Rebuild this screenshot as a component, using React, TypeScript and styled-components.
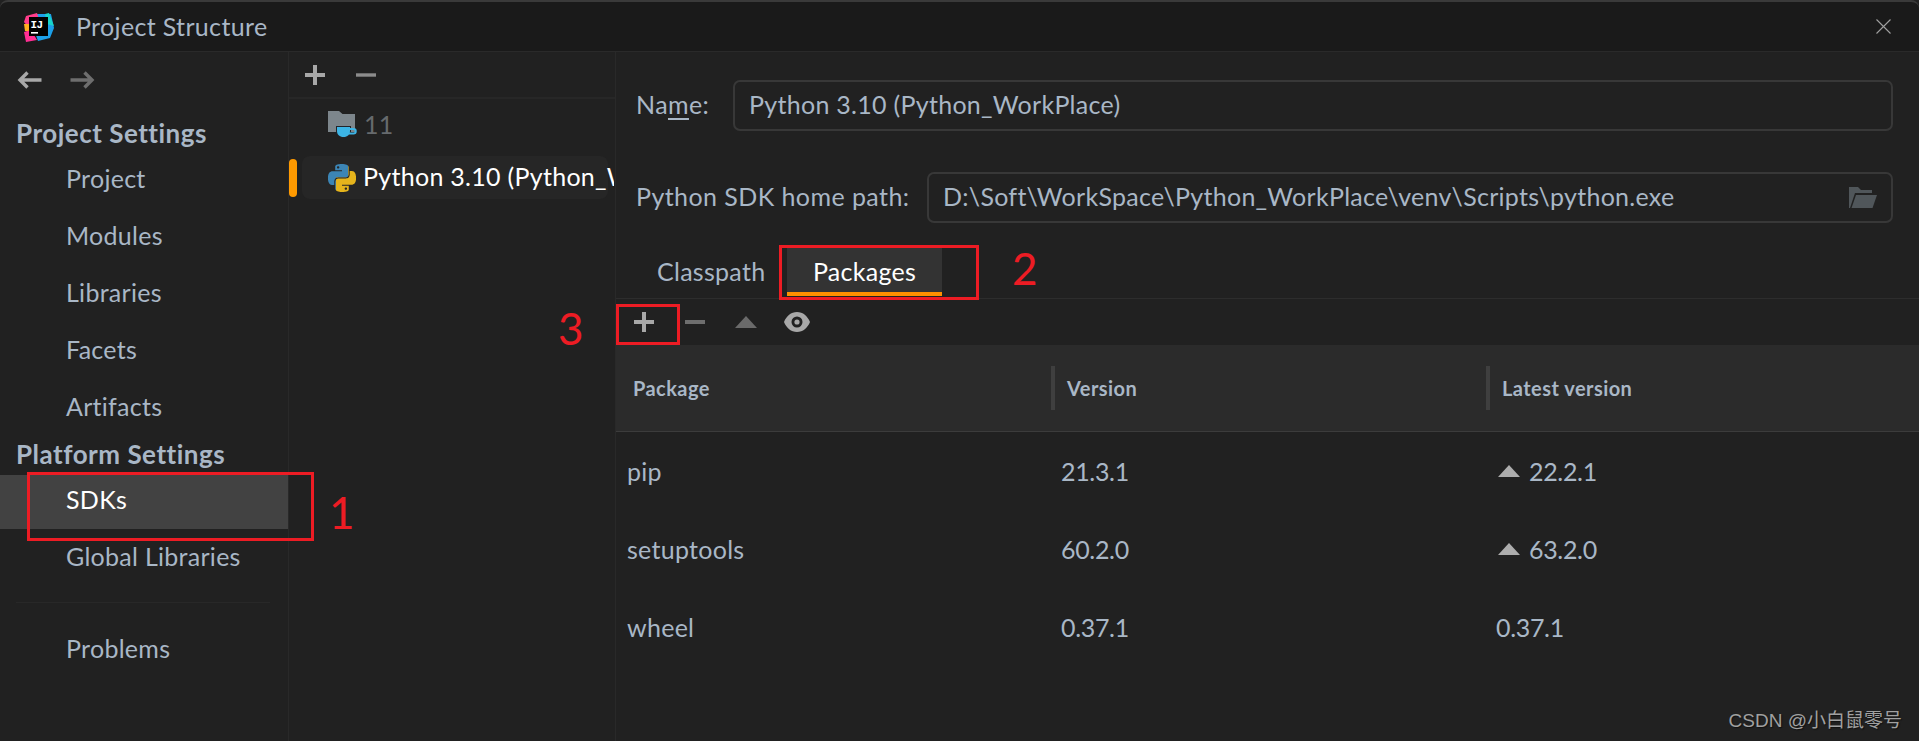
import React from "react"
import styled, { createGlobalStyle } from "styled-components"

const UI_FONT = `Lato, "Noto Sans", sans-serif`

const GlobalStyle = createGlobalStyle`
  html, body {
    margin: 0;
    padding: 0;
    background: #212121;
  }
  * {
    box-sizing: border-box;
  }
`

const pythonPath =
  "M14.25.18l.9.2.73.26.59.3.45.32.34.34.25.34.16.33.1.3.04.26.02.2-.01.13V8.5l-.05.63-.13.55-.21.46-.26.38-.3.31-.33.25-.35.19-.35.14-.33.1-.3.07-.26.04-.21.02H8.77l-.69.05-.59.14-.5.22-.41.27-.33.32-.27.35-.2.36-.15.37-.1.35-.07.32-.04.27-.02.21v3.06H3.17l-.21-.03-.28-.07-.32-.12-.35-.18-.36-.26-.36-.36-.35-.46-.32-.59-.28-.73-.21-.88-.14-1.05-.05-1.23.06-1.22.16-1.04.24-.87.32-.71.36-.57.4-.44.42-.33.42-.24.4-.16.36-.1.32-.05.24-.01h.16l.06.01h8.16v-.83H6.18l-.01-2.75-.02-.37.05-.34.11-.31.17-.28.25-.26.31-.23.38-.2.44-.18.51-.15.58-.12.64-.1.71-.06.77-.04.84-.02 1.27.05zm-6.3 1.98l-.23.33-.08.41.08.41.23.34.33.22.41.09.41-.09.33-.22.23-.34.08-.41-.08-.41-.23-.33-.33-.22-.41-.09-.41.09zm13.09 3.95l.28.06.32.12.35.18.36.27.36.35.35.47.32.59.28.73.21.88.14 1.04.05 1.23-.06 1.23-.16 1.04-.24.86-.32.71-.36.57-.4.45-.42.33-.42.24-.4.16-.36.09-.32.05-.24.02-.16-.01h-8.22v.82h5.84l.01 2.76.02.36-.05.34-.11.31-.17.29-.25.25-.31.24-.38.2-.44.17-.51.15-.58.13-.64.09-.71.07-.77.04-.84.01-1.27-.04-1.07-.14-.9-.2-.73-.25-.59-.3-.45-.33-.34-.34-.25-.34-.16-.33-.1-.3-.04-.25-.02-.2.01-.13v-5.34l.05-.64.13-.54.21-.46.26-.38.3-.32.33-.24.35-.2.35-.14.33-.1.3-.06.26-.04.21-.02.13-.01h5.84l.69-.05.59-.14.5-.21.41-.28.33-.32.27-.35.2-.36.15-.36.1-.35.07-.32.04-.28.02-.21V6.07h2.09l.14.01zm-6.47 14.25l-.23.33-.08.41.08.41.23.33.33.23.41.08.41-.08.33-.23.23-.33.08-.41-.08-.41-.23-.33-.33-.23-.41-.08-.41.08z"

const IdeaLogo = () => (
  <svg width="31" height="30" viewBox="0 0 31 30">
    <polygon points="14,2 28,2 31,16 27,26 15,29 11,18" fill="#1c9fe8" />
    <polygon points="22,2 26,1 31,14 24,12" fill="#19d4c8" />
    <polygon points="3,4 14,1 17,10 6,16 1,10" fill="#ff3d8b" />
    <polygon points="1,12 8,12 8,20 2,19" fill="#ffb020" />
    <polygon points="1,20 8,18 14,28 3,30" fill="#ff2e93" />
    <rect x="6" y="5" width="19" height="19" fill="#000" />
    <text x="7.5" y="15.5" fontFamily="'Liberation Mono', monospace" fontWeight="700" fontSize="11" fill="#fff" textLength="13">
      IJ
    </text>
    <rect x="8" y="20" width="7" height="1.6" fill="#fff" />
  </svg>
)

const CloseIcon = () => (
  <svg width="15" height="15" viewBox="0 0 15 15">
    <path d="M.5.5l14 14M14.5.5l-14 14" stroke="#a0a0a0" strokeWidth="1.1" fill="none" />
  </svg>
)

const ArrowIcon = ({ right, color }: { right?: boolean; color: string }) => (
  <svg width="25" height="18" viewBox="0 0 25 18" style={right ? { transform: "scaleX(-1)" } : undefined}>
    <path d="M24.5 9H3M10.5 1.5L3 9l7.5 7.5" stroke={color} strokeWidth="3.4" fill="none" />
  </svg>
)

const PlusIcon = () => (
  <svg width="20" height="20" viewBox="0 0 20 20">
    <path d="M10 0v20M0 10h20" stroke="#a8a8a8" strokeWidth="4" fill="none" />
  </svg>
)

const MinusIcon = () => (
  <svg width="20" height="20" viewBox="0 0 20 20">
    <path d="M0 10h20" stroke="#6e6e6e" strokeWidth="4" fill="none" />
  </svg>
)

const SmallMinusIcon = () => (
  <svg width="20" height="20" viewBox="0 0 20 20">
    <path d="M0 10h20" stroke="#8c8c8c" strokeWidth="3.4" fill="none" />
  </svg>
)

const UpIcon = ({ color, w, h }: { color: string; w: number; h: number }) => (
  <svg width={w} height={h} viewBox="0 0 22 12">
    <polygon points="11,0 22,12 0,12" fill={color} />
  </svg>
)

const EyeIcon = () => (
  <svg width="26" height="20" viewBox="0 0 26 20">
    <path
      fillRule="evenodd"
      d="M13 0C7 0 2.500 4 0 10c2.500 6 7 10 13 10s10.500-4 13-10C23.500 4 19 0 13 0zm0 4.500a5.500 5.500 0 1 1 0 11 5.500 5.500 0 0 1 0-11z"
      fill="#a8a8a8"
    />
    <circle cx="13" cy="10" r="2.600" fill="#a8a8a8" />
  </svg>
)

const FolderOpenIcon = () => (
  <svg width="28" height="21" viewBox="0 0 28 21">
    <path d="M0 0h9l3 3h11v3H6L1 21H0z" fill="#50565a" />
    <path d="M7 8h21l-4.500 13H2.500z" fill="#50565a" />
  </svg>
)

const SdkFolderIcon = () => (
  <svg width="29" height="27" viewBox="0 0 29 27">
    <path d="M0 0h11l3.500 3H27v18H0z" fill="#7d868c" />
    <path d="M8 15h15v5c0 4-3 7-7.500 7S8 24 8 20z" fill="#22242a" />
    <path d="M9 16h13v4c0 3.500-2.500 6-6.500 6S9 23.500 9 20z" fill="#3cb4e5" />
    <path d="M22 18h3.500a2.200 2.200 0 0 1 0 4.500H21" stroke="#3cb4e5" strokeWidth="2" fill="none" />
  </svg>
)

const PythonIcon = () => (
  <svg width="28" height="28" viewBox="0 0 24 24">
    <defs>
      <clipPath id="py-top">
        <polygon points="0,0 17.400,0 17.400,11.500 6.800,11.500 6.800,24 0,24" />
      </clipPath>
      <clipPath id="py-bottom">
        <polygon points="17.400,0 24,0 24,24 6.800,24 6.800,11.500 17.400,11.500" />
      </clipPath>
    </defs>
    <path d={pythonPath} fill="#3c85b5" clipPath="url(#py-top)" />
    <path d={pythonPath} fill="#e5b41c" clipPath="url(#py-bottom)" />
  </svg>
)

const Window = styled.div`
  position: relative;
  width: 1919px;
  height: 741px;
  overflow: hidden;
  display: flex;
  flex-direction: column;
  background: #212121;
  color: #a9b7c6;
  font-family: ${UI_FONT};
  font-size: 25px;
  letter-spacing: 0.28px;
`

const TitleBar = styled.header`
  flex: none;
  height: 52px;
  display: flex;
  align-items: center;
  padding: 0 28px 0 23px;
  background: #1a1a1a;
  border-top: 2px solid #3a3a3a;
  border-bottom: 1px solid #2a2a2a;
  border-radius: 8px 8px 0 0;
`

const Title = styled.span`
  flex: 1;
  margin-left: 22px;
  padding-bottom: 2px;
  letter-spacing: 0.34px;
`

const Body = styled.div`
  flex: 1;
  display: flex;
  min-height: 0;
`

const Sidebar = styled.nav`
  flex: none;
  width: 289px;
  border-right: 1px solid #292929;
`

const NavRow = styled.div`
  height: 66px;
  display: flex;
  gap: 28px;
  padding: 19px 0 0 17px;
`

const SectionHeading = styled.div`
  height: 36px;
  padding: 0 0 7px 16px;
  display: flex;
  align-items: center;
  font-weight: 700;
  font-size: 26px;
  letter-spacing: 0.5px;
`

const NavItem = styled.div<{ $active?: boolean }>`
  height: 54px;
  margin-bottom: 3px;
  padding: 0 0 7px 66px;
  display: flex;
  align-items: center;
  background: ${(p) => (p.$active ? "#424242" : "transparent")};
  color: ${(p) => (p.$active ? "#ffffff" : "#a9b7c6")};
`

const NavSeparator = styled.div`
  height: 1px;
  margin: 16px 18px 21px 16px;
  background: #282828;
`

const SdkColumn = styled.section`
  flex: none;
  width: 327px;
  overflow: hidden;
  border-right: 1px solid #292929;
`

const SdkToolbar = styled.div`
  height: 47px;
  display: flex;
  align-items: center;
  border-bottom: 2px solid #272727;
`

const ToolSlot = styled.span`
  flex: none;
  width: 51px;
  display: flex;
  justify-content: center;
  align-items: center;
`

const SdkList = styled.div`
  padding-top: 4px;
`

const SdkRow = styled.div<{ $selected?: boolean }>`
  display: flex;
  align-items: center;
  height: 43px;
  margin-bottom: 10px;
  white-space: nowrap;
  padding-left: ${(p) => (p.$selected ? "0" : "39px")};
  color: ${(p) => (p.$selected ? "#ffffff" : "#666a6d")};
  svg {
    flex: none;
  }
`

const SelectionBar = styled.span`
  flex: none;
  width: 8px;
  height: 38px;
  margin-right: 5px;
  border-radius: 4px;
  background: #ff9a00;
`

const SelectedBox = styled.div`
  flex: none;
  width: 306px;
  height: 43px;
  padding-left: 26px;
  display: flex;
  align-items: center;
  gap: 7px;
  border-radius: 8px;
  background: #262626;
`

const SdkName = styled.span`
  margin-left: 7px;
  padding-bottom: 1px;
`

const SelectedName = styled.span`
  flex: none;
  width: 251px;
  overflow: hidden;
  padding-bottom: 4px;
`

const Details = styled.main`
  flex: 1;
  min-width: 0;
  display: flex;
  flex-direction: column;
  padding-top: 28px;
`

const FieldRow = styled.div`
  display: flex;
  align-items: center;
  padding: 0 26px 0 20px;
  margin-bottom: 41px;
  &:nth-of-type(2) {
    margin-bottom: 25px;
  }
`

const FieldLabel = styled.label<{ $width: number }>`
  flex: none;
  padding-bottom: 3px;
  width: ${(p) => p.$width}px;
  letter-spacing: 0.42px;
  u {
    text-underline-offset: 4px;
  }
`

const FieldInput = styled.div`
  flex: 1;
  height: 51px;
  display: flex;
  align-items: center;
  justify-content: space-between;
  padding: 0 14px 3px 14px;
  border: 2px solid #383838;
  border-radius: 7px;
  svg {
    margin-top: 3px;
  }
`

const Tabs = styled.div`
  flex: none;
  height: 51px;
  display: flex;
  padding-left: 41px;
  border-bottom: 1px solid #2d2d2d;
`

const Tab = styled.div<{ $active?: boolean }>`
  height: 48px;
  padding-top: 1px;
  display: flex;
  align-items: center;
  width: ${(p) => (p.$active ? "155px" : "130px")};
  justify-content: ${(p) => (p.$active ? "center" : "flex-start")};
  color: ${(p) => (p.$active ? "#ffffff" : "#a9b7c6")};
  background: ${(p) => (p.$active ? "#333333" : "transparent")};
  border-bottom: ${(p) => (p.$active ? "4px solid #ff9000" : "4px solid transparent")};
`

const PackageToolbar = styled.div`
  flex: none;
  height: 46px;
  display: flex;
  align-items: center;
  padding-left: 2px;
`

const TableHeader = styled.div`
  flex: none;
  height: 87px;
  display: grid;
  grid-template-columns: 435px 435px 1fr;
  background: #2b2b2b;
  border-bottom: 1px solid #3c3c3c;
  font-size: 20px;
  font-weight: 700;
  letter-spacing: 0.45px;
`

const HeaderCell = styled.div`
  display: flex;
  align-items: center;
  &:first-child {
    padding-left: 17px;
  }
`

const HeaderDivider = styled.span`
  flex: none;
  width: 4px;
  height: 44px;
  margin-right: 12px;
  background: #3f3f3f;
`

const TableRow = styled.div`
  height: 78px;
  display: grid;
  grid-template-columns: 435px 435px 1fr;
  align-items: center;
`

const Cell = styled.div`
  display: flex;
  align-items: center;
  padding-left: 10px;
  letter-spacing: -0.32px;
  &:first-child {
    padding-left: 11px;
    letter-spacing: 0.28px;
  }
`

const UpgradeMark = styled.span`
  display: flex;
  margin: 0 9px 0 2px;
`

const Annotation = styled.div<{ $left: number; $top: number; $width: number; $height: number }>`
  position: absolute;
  left: ${(p) => p.$left}px;
  top: ${(p) => p.$top}px;
  width: ${(p) => p.$width}px;
  height: ${(p) => p.$height}px;
  border: 3px solid #ed1c24;
`

const AnnotationNumber = styled.span<{ $left: number; $top: number }>`
  position: absolute;
  left: ${(p) => p.$left}px;
  top: ${(p) => p.$top}px;
  font-size: 44px;
  line-height: 44px;
  color: #ed1c24;
`

const Watermark = styled.span`
  position: absolute;
  right: 17px;
  top: 709px;
  font-family: "Liberation Sans", "Noto Sans CJK SC", sans-serif;
  font-size: 19px;
  line-height: 24px;
  letter-spacing: 0;
  color: #a0a0a0;
  text-shadow: 1px 1px 1px #111;
`

const sidebarTop = ["Project", "Modules", "Libraries", "Facets", "Artifacts"]

const packages = [
  { name: "pip", version: "21.3.1", latest: "22.2.1", upgrade: true },
  { name: "setuptools", version: "60.2.0", latest: "63.2.0", upgrade: true },
  { name: "wheel", version: "0.37.1", latest: "0.37.1", upgrade: false },
]

export default function App() {
  return (
    <Window>
      <GlobalStyle />
      <TitleBar>
        <IdeaLogo />
        <Title>Project Structure</Title>
        <CloseIcon />
      </TitleBar>
      <Body>
        <Sidebar>
          <NavRow>
            <ArrowIcon color="#a8a8a8" />
            <ArrowIcon right color="#6e6e6e" />
          </NavRow>
          <SectionHeading>Project Settings</SectionHeading>
          {sidebarTop.map((item) => (
            <NavItem key={item}>{item}</NavItem>
          ))}
          <SectionHeading>Platform Settings</SectionHeading>
          <NavItem $active>SDKs</NavItem>
          <NavItem>Global Libraries</NavItem>
          <NavSeparator />
          <NavItem>Problems</NavItem>
        </Sidebar>
        <SdkColumn>
          <SdkToolbar>
            <ToolSlot>
              <PlusIcon />
            </ToolSlot>
            <ToolSlot>
              <SmallMinusIcon />
            </ToolSlot>
          </SdkToolbar>
          <SdkList>
            <SdkRow>
              <SdkFolderIcon />
              <SdkName>11</SdkName>
            </SdkRow>
            <SdkRow $selected>
              <SelectionBar />
              <SelectedBox>
                <PythonIcon />
                <SelectedName>Python 3.10 (Python_WorkPlace)</SelectedName>
              </SelectedBox>
            </SdkRow>
          </SdkList>
        </SdkColumn>
        <Details>
          <FieldRow>
            <FieldLabel $width={97}>
              Na<u>m</u>e:
            </FieldLabel>
            <FieldInput>Python 3.10 (Python_WorkPlace)</FieldInput>
          </FieldRow>
          <FieldRow>
            <FieldLabel $width={291}>Python SDK home path:</FieldLabel>
            <FieldInput>
              D:\Soft\WorkSpace\Python_WorkPlace\venv\Scripts\python.exe
              <FolderOpenIcon />
            </FieldInput>
          </FieldRow>
          <Tabs>
            <Tab>Classpath</Tab>
            <Tab $active>Packages</Tab>
          </Tabs>
          <PackageToolbar>
            <ToolSlot>
              <PlusIcon />
            </ToolSlot>
            <ToolSlot>
              <MinusIcon />
            </ToolSlot>
            <ToolSlot>
              <UpIcon color="#6a6a6a" w={22} h={12} />
            </ToolSlot>
            <ToolSlot>
              <EyeIcon />
            </ToolSlot>
          </PackageToolbar>
          <TableHeader>
            <HeaderCell>Package</HeaderCell>
            <HeaderCell>
              <HeaderDivider />
              Version
            </HeaderCell>
            <HeaderCell>
              <HeaderDivider />
              Latest version
            </HeaderCell>
          </TableHeader>
          {packages.map((pkg) => (
            <TableRow key={pkg.name}>
              <Cell>{pkg.name}</Cell>
              <Cell>{pkg.version}</Cell>
              <Cell>
                {pkg.upgrade && (
                  <UpgradeMark>
                    <UpIcon color="#adadad" w={22} h={12} />
                  </UpgradeMark>
                )}
                {pkg.latest}
              </Cell>
            </TableRow>
          ))}
        </Details>
      </Body>
      <Annotation $left={27} $top={472} $width={287} $height={69} />
      <AnnotationNumber $left={329} $top={490}>1</AnnotationNumber>
      <Annotation $left={779} $top={245} $width={200} $height={55} />
      <AnnotationNumber $left={1012} $top={246}>2</AnnotationNumber>
      <Annotation $left={616} $top={304} $width={64} $height={41} />
      <AnnotationNumber $left={558} $top={306}>3</AnnotationNumber>
      <Watermark>CSDN @小白鼠零号</Watermark>
    </Window>
  )
}
